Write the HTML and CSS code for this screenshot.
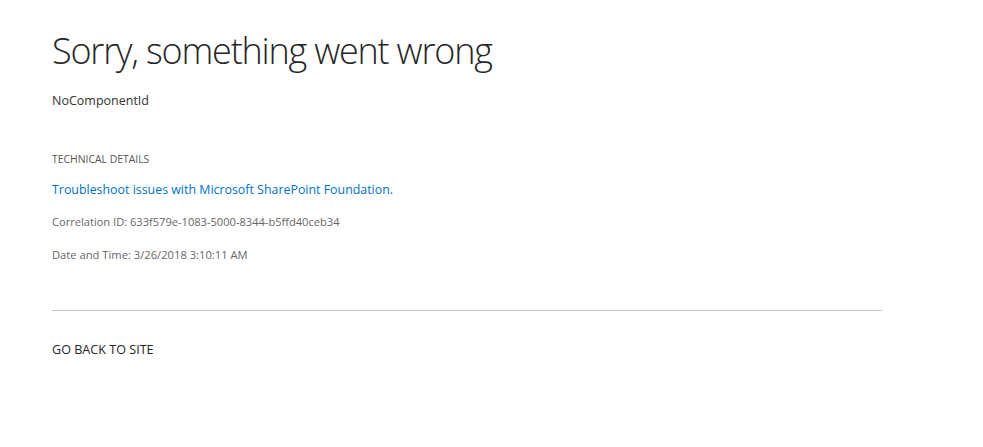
FILE: index.html
```html
<!DOCTYPE html>
<html lang="en">

<head>
    <meta charset="UTF-8">
    <title>Error</title>
    <link rel="stylesheet" href="styles.css">
</head>

<body>

    <div class="error-page">
        <h1 class="page-title">Sorry, something went wrong</h1>
        <p class="error-message">NoComponentId</p>

        <div class="details">
            <h2 class="details-title">TECHNICAL DETAILS</h2>
            <a class="help-link" href="#">Troubleshoot issues with Microsoft SharePoint Foundation.</a>
            <p class="detail-line">Correlation ID: 633f579e-1083-5000-8344-b5ffd40ceb34</p>
            <p class="detail-line date-line">Date and Time: 3/26/2018 3:10:11 AM</p>
        </div>

        <hr class="divider">

        <a class="back-link" href="#">GO BACK TO SITE</a>
    </div>

</body>

</html>
```

FILE: styles.css
```css
body {
    font-family: 'Open Sans', 'Noto Sans', sans-serif;
    margin: 0;
    padding: 0;
    background-color: #fff;
    color: #333;
}

.error-page {
    width: 830px;
    padding: 27px 0 0 52px;
}

.page-title {
    font-size: 36px;
    font-weight: 300;
    letter-spacing: -1.2px;
    color: #262626;
    margin: 0;
    line-height: 48px;
}

.error-message {
    font-size: 12.5px;
    line-height: 16px;
    margin: 18px 0 0 0;
    color: #333;
}

.details {
    margin-top: 43px;
}

.details-title {
    font-size: 10.4px;
    line-height: 14px;
    font-weight: normal;
    color: #555;
    margin: 0 0 16px 0;
}

.help-link {
    display: block;
    font-size: 12.4px;
    line-height: 16px;
    color: #0072c6;
    text-decoration: none;
    margin-bottom: 16px;
}

.detail-line {
    font-size: 11.1px;
    line-height: 16px;
    color: #666;
    margin: 0;
}

.date-line {
    font-size: 11.2px;
    margin-top: 17px;
}

.divider {
    border: none;
    border-top: 1px solid #c6c6c6;
    margin: 47px 0 31px 0;
}

.back-link {
    display: block;
    font-size: 12.6px;
    line-height: 16px;
    color: #262626;
    text-decoration: none;
}
```
